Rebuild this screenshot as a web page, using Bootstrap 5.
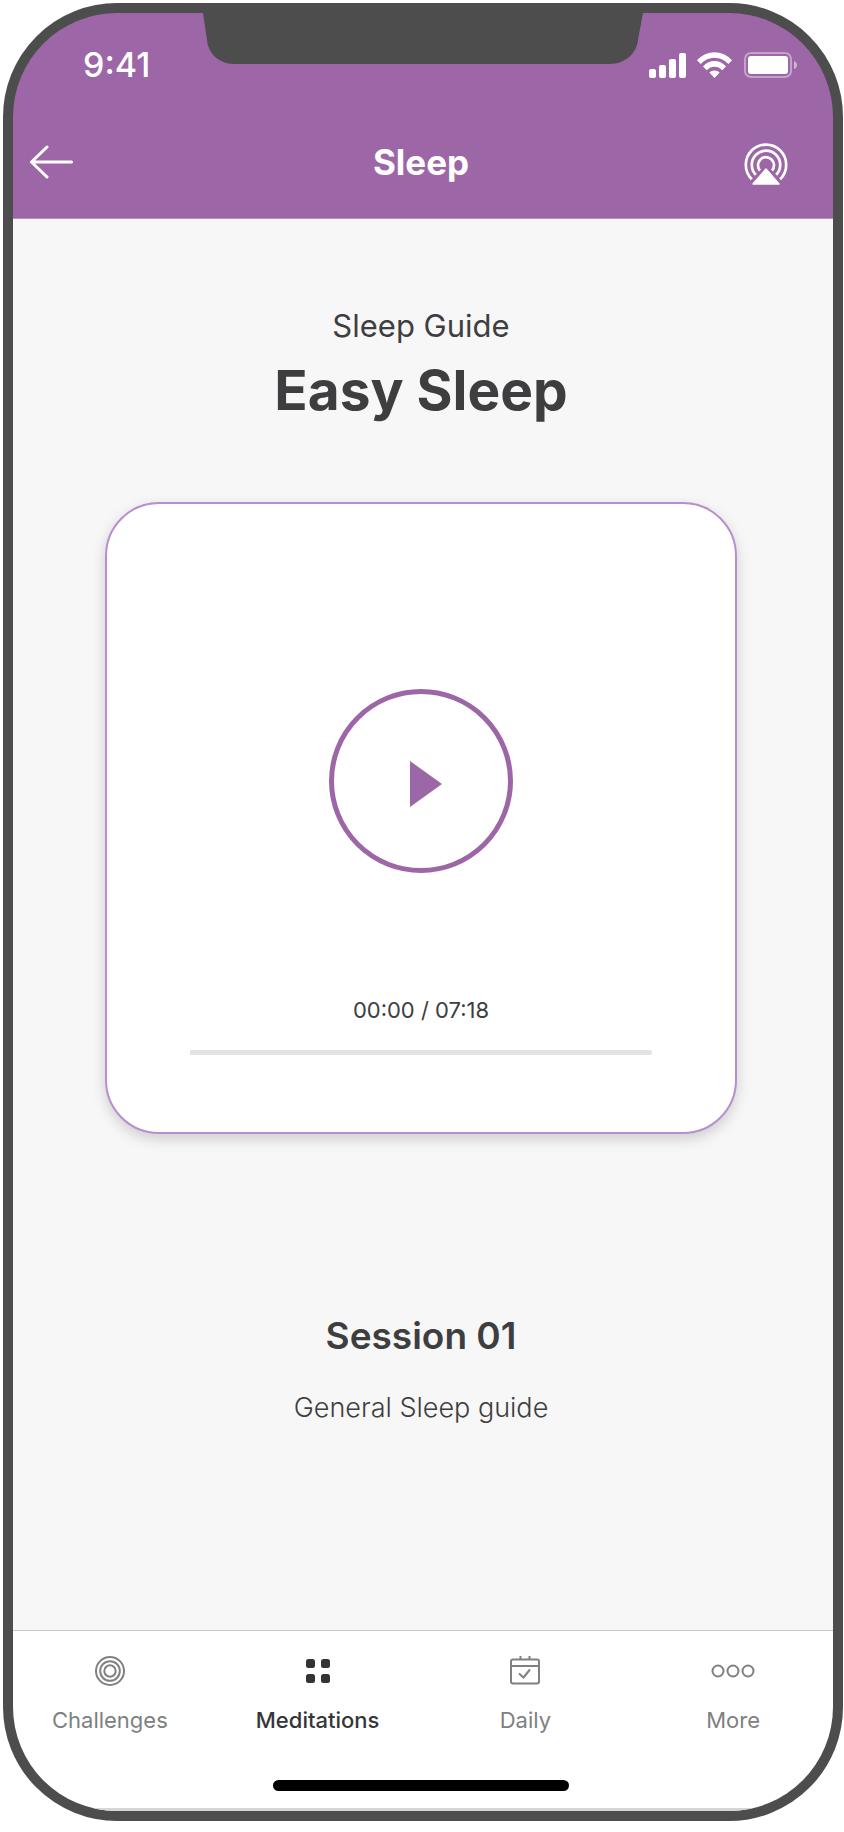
<!DOCTYPE html>
<html lang="en">
<head>
<meta charset="utf-8">
<meta name="viewport" content="width=device-width, initial-scale=1">
<title>Sleep</title>
<link href="https://cdn.jsdelivr.net/npm/bootstrap@5.3.0/dist/css/bootstrap.min.css" rel="stylesheet">
<style>
  :root { --plum: #9d66a6; --shell: #4d4d4d; --ink: #3e3e40; }
  body { font-family: Inter, "Liberation Sans", sans-serif; color: var(--ink); background: #fff; padding: 3px 1px 11px 3px; }
  .phone { min-height: calc(100vh - 14px); border: 10px solid var(--shell); border-radius: 114px; background: var(--shell); }
  .topbar { background: var(--plum); padding-top: 32px; border-bottom: 1px solid #b98fbf; }
  .notch { width: 440px; height: 52px; margin-top: -1px; }
  .status { height: 40px; padding: 0 36px 0 70px; margin-bottom: 21px; }
  .clock { font-size: 34px; line-height: 40px; font-weight: 500; }
  .title-row { display: grid; grid-template-columns: 1fr auto 1fr; height: 112px; padding-right: 4px; }
  .title-row h1 { font-size: 35px; line-height: 44px; font-weight: 700; }
  .back { padding: 0 0 0 16px; }
  .cast { padding: 4px 41px 0 0; }
  .guide { background: #f7f7f7; padding: 85px 4px 0 0; }
  .kicker { font-size: 31px; line-height: 44px; margin-bottom: 8px; }
  .headline { font-size: 55px; line-height: 68px; font-weight: 700; margin-bottom: 78px; }
  .player { width: 77.5%; aspect-ratio: 1; border: 2px solid #b78fce; border-radius: 54px; padding-top: 185px; box-shadow: 0 5px 14px rgba(0,0,0,.17); }
  .play { width: 184px; height: 184px; border: 5px solid var(--plum); margin-bottom: 123px; }
  .time { font-size: 22px; line-height: 28px; margin-bottom: 26px; }
  .seek { width: 73.5%; height: 5px; }
  .seek::-webkit-slider-runnable-track { height: 5px; background: #e3e3e3; }
  .seek::-webkit-slider-thumb { width: 1px; height: 5px; margin: 0; background: #e3e3e3; }
  .session { font-size: 37px; line-height: 46px; font-weight: 600; margin: 179px 0 32px; }
  .note { font-size: 27px; line-height: 34px; font-weight: 300; }
  .tabbar { border-top: 1px solid #c9c9c9; border-bottom: 3px solid #d6d6d6; padding: 24px 4px 17px 0; }
  .tabs { margin: 0 -8px 0 -7px; }
  .tab { color: #808080; font-size: 22px; line-height: 28px; gap: 19px; }
  .tab.active { color: #363638; font-weight: 500; }
  .home { width: 296px; height: 11px; background: #000; margin-top: 46px; }
</style>
</head>
<body>
<div class="phone d-flex flex-column overflow-hidden position-relative">
  <svg class="notch position-absolute top-0 start-50 translate-middle-x" viewBox="0 0 440 52" aria-hidden="true"><path fill="#4d4d4d" d="M0 0V1L4 28C5 41 16 52 31 52H407C422 52 434 41 435 28L440 1V0Z"/></svg>
  <header class="topbar text-white">
    <div class="status d-flex align-items-center justify-content-between">
      <span class="clock">9:41</span>
      <svg width="148" height="26" viewBox="0 0 148 26" fill="#fff" role="img" aria-label="Signal, wifi and battery">
        <rect x="0" y="17" width="7" height="9" rx="2"/><rect x="10" y="13" width="7" height="13" rx="2"/><rect x="20" y="7" width="7" height="19" rx="2"/><rect x="30" y="1" width="7" height="25" rx="2"/>
        <path d="M48 8.300C57.500-2.500 73.500-2.500 83 8.300L79.300 12C71.500 3.800 59.500 3.800 51.700 12ZM54 14.500C60.500 7.300 70.500 7.300 77 14.500L73.200 18.300C69 13.700 62 13.700 57.800 18.300ZM60.300 20.600C63 17.800 68 17.800 70.700 20.600L65.500 26Z"/>
        <rect x="96" y="1" width="46" height="24" rx="6" fill="none" stroke="#fff" stroke-opacity=".4" stroke-width="2"/>
        <rect x="99" y="4" width="40" height="18" rx="3"/><path d="M145 9V17Q148 16 148 13T145 9Z" opacity=".5"/>
      </svg>
    </div>
    <div class="title-row align-items-center">
      <button type="button" class="back btn border-0 text-start lh-1" aria-label="Back">
        <svg width="46" height="34" viewBox="0 0 46 34" fill="none" stroke="#fff" stroke-width="3" stroke-linecap="round" stroke-linejoin="round"><path d="M42.500 17H2.500M18 2L2.500 17L18 32"/></svg>
      </button>
      <h1 class="m-0">Sleep</h1>
      <button type="button" class="cast btn border-0 text-end lh-1" aria-label="AirPlay">
        <svg width="44" height="44" viewBox="0 0 44 44" fill="none" stroke="#fff" stroke-width="2.700"><path d="M7.800 37.200A20.200 20.200 0 1 1 36.200 37.200M11.800 32.800A14.200 14.200 0 1 1 32.200 32.800M16 28.500A8 8 0 1 1 28 28.500"/><path d="M22 27L35 42H9Z" fill="#fff" stroke-width="1.500" stroke-linejoin="round"/></svg>
      </button>
    </div>
  </header>

  <main class="guide flex-grow-1 d-flex flex-column align-items-center text-center">
    <p class="kicker">Sleep Guide</p>
    <h2 class="headline">Easy Sleep</h2>
    <section class="player bg-white d-flex flex-column align-items-center" aria-label="Player">
      <button type="button" class="play btn rounded-circle p-0 flex-shrink-0" aria-label="Play">
        <svg class="d-block" width="174" height="174" viewBox="0 0 174 174" fill="#9d66a6"><path d="M76 67L108 90L76 113Z"/></svg>
      </button>
      <label class="time" for="seek">00:00 / 07:18</label>
      <input class="seek form-range" id="seek" type="range" min="0" max="438" value="0">
    </section>
    <h3 class="session">Session 01</h3>
    <p class="note m-0">General Sleep guide</p>
  </main>

  <footer class="tabbar bg-white">
    <nav class="tabs d-flex" aria-label="Main">
      <a href="#" class="tab col d-flex flex-column align-items-center text-decoration-none">
        <svg width="32" height="32" viewBox="0 0 32 32" fill="none" stroke="currentColor" stroke-width="2"><circle cx="16" cy="16" r="14"/><circle cx="16" cy="16" r="9.800"/><circle cx="16" cy="16" r="5.700"/></svg>
        <span>Challenges</span></a>
      <a href="#" class="tab active col d-flex flex-column align-items-center text-decoration-none" aria-current="page">
        <svg width="32" height="32" viewBox="0 0 32 32" fill="#333"><rect x="4" y="4" width="9" height="9" rx="2.500"/><rect x="19" y="4" width="9" height="9" rx="2.500"/><rect x="4" y="19" width="9" height="9" rx="2.500"/><rect x="19" y="19" width="9" height="9" rx="2.500"/></svg>
        <span>Meditations</span></a>
      <a href="#" class="tab col d-flex flex-column align-items-center text-decoration-none">
        <svg width="32" height="32" viewBox="0 0 32 32" fill="none" stroke="currentColor" stroke-width="2"><rect x="2" y="4.500" width="28" height="24" rx="2"/><path d="M2 11H30M11.500 1V4.500M20.500 1V4.500M10 18.500L14.500 22.500L21 14.500"/></svg>
        <span>Daily</span></a>
      <a href="#" class="tab col d-flex flex-column align-items-center text-decoration-none">
        <svg width="44" height="32" viewBox="0 0 44 32" fill="none" stroke="currentColor" stroke-width="2"><circle cx="7" cy="16" r="5.500"/><circle cx="22" cy="16" r="5.500"/><circle cx="37" cy="16" r="5.500"/></svg>
        <span>More</span></a>
    </nav>
    <div class="home rounded-pill mx-auto"></div>
  </footer>
</div>
<script src="https://cdn.jsdelivr.net/npm/bootstrap@5.3.0/dist/js/bootstrap.bundle.min.js"></script>
</body>
</html>
